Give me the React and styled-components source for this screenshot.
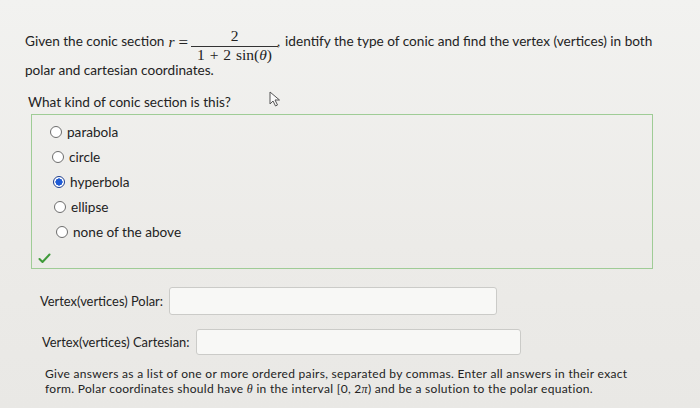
import React from "react";
import styled, { createGlobalStyle } from "styled-components";

const Global = createGlobalStyle`
  html, body { margin: 0; padding: 0; }
  body {
    background: #ecebe8;
    font-family: Lato, "Open Sans", sans-serif;
    color: #232323;
    width: 700px;
    height: 408px;
    overflow: hidden;
  }
`;

const Page = styled.div`
  position: relative;
  width: 700px;
  height: 408px;
  box-sizing: border-box;
  padding: 21px 0 0 25px;
  background: linear-gradient(180deg, #f2f2f0 0%, #ecebe8 60%, #e9e8e5 100%);
`;

const Prompt = styled.p`
  margin: 0;
  font-size: 13.6px;
  line-height: 1;
`;

const FirstLine = styled.div`
  display: flex;
  align-items: center;
  white-space: nowrap;
  height: 42px;
`;

const Math = styled.span`
  font-family: "Liberation Serif", "DejaVu Serif", serif;
  font-size: 15.5px;
  display: inline-flex;
  align-items: center;
  margin: 0 2px 0 4px;
`;

const Var = styled.i`
  font-style: italic;
`;

const Eq = styled.span`
  margin: 0 6px 0 4px;
  font-size: 17px;
`;

const Frac = styled.span`
  display: inline-flex;
  flex-direction: column;
  align-items: center;
  margin-top: 6px;
`;

const Num = styled.span`
  padding: 0 3px 3px;
  border-bottom: 1px solid #333;
  width: 100%;
  text-align: center;
`;

const Den = styled.span`
  padding: 0 3px;
  word-spacing: 1px;
`;

const Comma = styled.span`
  margin-right: 5px;
`;

const SecondLine = styled.div`
  margin-top: 1px;
  height: 16px;
`;

const Question = styled.div`
  font-size: 13.6px;
  margin: 14px 0 0 3px;
`;

const ChoiceBox = styled.div`
  margin: 4px 0 0 6px;
  width: 622px;
  height: 155px;
  border: 1px solid #9fcc96;
  box-sizing: border-box;
  position: relative;
  padding: 8px 0 0 18px;
  display: flex;
  flex-direction: column;
  gap: 8px;
`;

const Choice = styled.label`
  display: flex;
  align-items: center;
  gap: 5px;
  font-size: 13.6px;
  height: 17px;
  padding-left: ${(p) => p.$shift}px;
`;

const Radio = styled.span`
  width: 10px;
  height: 10px;
  border-radius: 50%;
  border: 1px solid ${(p) => (p.$on ? "#1f3f8f" : "#6d6d6d")};
  background: ${(p) => (p.$on ? "radial-gradient(circle, #1e5bd6 0 3.4px, #fff 3.8px)" : "#fff")};
  flex: none;
`;

const Check = styled.svg`
  position: absolute;
  left: 6px;
  bottom: 4px;
`;

const Cursor = styled.svg`
  position: absolute;
  left: 269px;
  top: 91px;
`;

const FieldRow = styled.div`
  display: flex;
  align-items: center;
  gap: 6px;
  margin-left: ${(p) => p.$indent}px;
  margin-top: ${(p) => p.$top}px;
  font-size: 12.9px;
`;

const Input = styled.div`
  width: ${(p) => p.$w}px;
  height: ${(p) => p.$h}px;
  background: #f8f8f6;
  border: 1px solid #cbcbc8;
  border-radius: 3px;
`;

const Note = styled.p`
  margin: 12px 0 0 20px;
  font-size: 12px;
  letter-spacing: 0.3px;
  line-height: 14.5px;
`;

const Theta = styled.i`
  font-family: "Liberation Serif", serif;
  font-style: italic;
`;

const options = [
  { label: "parabola", shift: 0 },
  { label: "circle", shift: 2 },
  { label: "hyperbola", shift: 3, on: true },
  { label: "ellipse", shift: 4 },
  { label: "none of the above", shift: 6 },
];

export default function App() {
  return (
    <>
      <Global />
      <Page>
        <Prompt>
          <FirstLine>
            Given the conic section
            <Math>
              <Var>r</Var>
              <Eq>=</Eq>
              <Frac>
                <Num>2</Num>
                <Den>1 + 2 sin(<Var>θ</Var>)</Den>
              </Frac>
            </Math>
            <Comma>,</Comma>
            identify the type of conic and find the vertex (vertices) in both
          </FirstLine>
          <SecondLine>polar and cartesian coordinates.</SecondLine>
        </Prompt>
        <Question>What kind of conic section is this?</Question>
        <Cursor width="12" height="16" viewBox="0 0 12 16">
          <path d="M1 1 L1 13 L4 10 L6.5 15 L8.5 14 L6 9 L10.5 9 Z" fill="#fafafa" stroke="#555" strokeWidth="1" strokeLinejoin="round" />
        </Cursor>
        <ChoiceBox>
          {options.map((o) => (
            <Choice key={o.label} $shift={o.shift}>
              <Radio $on={o.on} />
              {o.label}
            </Choice>
          ))}
          <Check width="13" height="11" viewBox="0 0 13 11">
            <path d="M1.5 6 L4.5 9 L11.5 1.5" fill="none" stroke="#3f9a3a" strokeWidth="2" strokeLinecap="round" strokeLinejoin="round" />
          </Check>
        </ChoiceBox>
        <FieldRow $indent={15} $top={18}>
          Vertex(vertices) Polar:
          <Input $w={326} $h={26} />
        </FieldRow>
        <FieldRow $indent={17} $top={14}>
          Vertex(vertices) Cartesian:
          <Input $w={323} $h={24} />
        </FieldRow>
        <Note>
          Give answers as a list of one or more ordered pairs, separated by commas. Enter all answers in their exact
          <br />
          form. Polar coordinates should have <Theta>θ</Theta> in the interval [0, 2<Theta>π</Theta>) and be a solution to the polar equation.
        </Note>
      </Page>
    </>
  );
}
